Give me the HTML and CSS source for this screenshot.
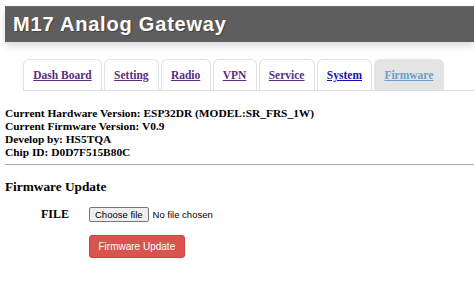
FILE: index.html
```html
<!DOCTYPE html>
<html>
<head>
<meta charset="utf-8">
<link rel="stylesheet" href="styles.css">
</head>
<body>
<div class="header"><h1>M17 Analog Gateway</h1></div>
<ul class="tabs">
  <li class="tab"><a class="visited" href="#">Dash Board</a></li>
  <li class="tab"><a class="visited" href="#">Setting</a></li>
  <li class="tab"><a class="visited" href="#">Radio</a></li>
  <li class="tab"><a class="visited" href="#">VPN</a></li>
  <li class="tab"><a class="visited" href="#">Service</a></li>
  <li class="tab"><a class="link" href="#">System</a></li>
  <li class="tab active"><a class="current" href="#">Firmware</a></li>
</ul>
<div class="info">
  <div>Current Hardware Version: ESP32DR (MODEL:SR_FRS_1W)</div>
  <div>Current Firmware Version: V0.9</div>
  <div>Develop by: HS5TQA</div>
  <div>Chip ID: D0D7F515B80C</div>
</div>
<hr class="rule">
<h2 class="section">Firmware Update</h2>
<div class="form">
  <div class="row">
    <span class="label">FILE</span>
    <span class="file"><span class="choose">Choose file</span><span class="none">No file chosen</span></span>
  </div>
  <div class="row">
    <span class="label"></span>
    <button class="btn">Firmware Update</button>
  </div>
</div>
</body>
</html>
```
FILE: styles.css
```css
html, body { margin: 0; padding: 0; background: #fff; }
body { font-family: "Liberation Serif", "Times New Roman", serif; padding-left: 5px; overflow: hidden; }
.header {
  background: #5e5e5e;
  margin-top: 6px;
  height: 35px;
  border-top: 1px solid #6e6e6e;
  box-shadow: 0 4px 7px rgba(0,0,0,0.14);
  display: flex;
  align-items: center;
}
.header h1 {
  margin: 0 0 0 8px;
  color: #fff;
  font-family: "Liberation Sans", Arial, sans-serif;
  font-size: 20px;
  font-weight: bold;
  letter-spacing: 0.8px;
  text-shadow: 1px 1px 1px rgba(0,0,0,0.3);
}
.tabs {
  list-style: none;
  margin: 17px 0 0 18px;
  padding: 0;
  display: flex;
  gap: 2px;
  border-bottom: 1px solid #ddd;
}
.tab {
  border: 1px solid #e2e2e2;
  border-bottom: none;
  border-radius: 6px 6px 0 0;
  height: 30px;
  padding: 0 9.2px;
  display: flex;
  align-items: center;
  font-size: 11.5px;
  font-weight: bold;
}
.tab a { text-decoration: underline; }
.tab a.visited { color: #5a2d82; }
.tab a.link { color: #1a0dab; }
.tab.active { background: #e4e4e4; border-color: #e4e4e4; }
.tab a.current { color: #6a9fd0; }
.info {
  margin-top: 16px;
  font-size: 11.4px;
  font-weight: bold;
  line-height: 13px;
}
.rule { margin: 5px 0 0 0; border: none; border-top: 1px solid #aaa; height: 0; }
.section { font-size: 13.3px; margin: 14px 0 0 0; }
.form { margin-top: 12px; }
.row { display: flex; align-items: center; margin-bottom: 13px; }
.label { width: 84px; padding-left: 36px; box-sizing: border-box; font-weight: bold; font-size: 12px; }
.file { font-family: "Liberation Sans", Arial, sans-serif; font-size: 9.5px; display: flex; align-items: center; }
.choose { border: 1px solid #767676; background: #efefef; border-radius: 2px; padding: 1px 5px; margin-right: 4px; }
.btn {
  background: #d9534f;
  color: #fff;
  border: 1px solid #d43f3a;
  border-radius: 3px;
  font-family: "Liberation Sans", Arial, sans-serif;
  font-size: 10px;
  padding: 0 8.5px;
  height: 23px;
}
```
